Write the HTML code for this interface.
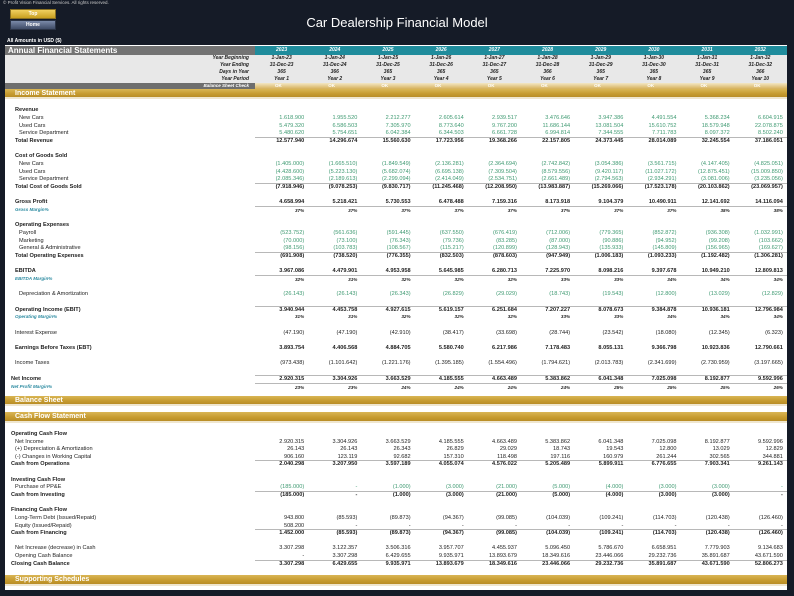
<!DOCTYPE html>
<html><head><meta charset="utf-8"><style>
body{margin:0;width:794px;height:596px;background:#151b27;font-family:"Liberation Sans",sans-serif;overflow:hidden;position:relative}
.abs{position:absolute}
.sheet{position:absolute;left:5px;top:45px;width:782px;height:545px;background:#fff}
.r{position:absolute;left:5px;width:782px;height:8px;display:flex;font-size:5.6px;line-height:8px;color:#222;white-space:nowrap}
.l{width:250px;box-sizing:border-box;overflow:hidden}
.c{width:53.2px;text-align:right;padding-right:4px;box-sizing:border-box}
.g .c{color:#3f9a72}
.b{font-weight:bold}
.t .c{border-top:1px solid #b8b8b8;line-height:7px}
.m{font-style:italic;font-weight:bold;color:#2b8aa0;font-size:4.6px}
.m .c{color:#222}
.bar{position:absolute;left:5px;width:782px;background:linear-gradient(#d9b655,#c69b2f 60%,#b98d27);color:#fff;font-weight:bold;font-size:7px;line-height:9px;padding-left:10px;box-sizing:border-box;border-bottom:2px solid #efe6cf}
.hd{background:#e8e8e8;font-style:italic;font-weight:bold;font-size:5px}
.hd .l{text-align:right;padding-right:6px}
.hd .c{text-align:center;padding:0}
</style></head><body>
<div class="abs" style="left:3px;top:0;font-size:4.5px;color:#ccc">© Profit Vision Financial Services. All rights reserved.</div>
<div class="abs" style="left:10px;top:9px;width:44px;height:8px;background:linear-gradient(#f0d060,#c9a020);border:1px solid #8a7020;color:#fff;font-size:5px;font-weight:bold;text-align:center;line-height:8px">Top</div>
<div class="abs" style="left:10px;top:20px;width:44px;height:8px;background:linear-gradient(#7a8aa8,#3e4b66);border:1px solid #2a3345;color:#fff;font-size:5px;font-weight:bold;text-align:center;line-height:8px">Home</div>
<div class="abs" style="left:0;width:794px;top:15px;text-align:center;color:#fff;font-size:13px">Car Dealership Financial Model</div>
<div class="abs" style="left:7px;top:38px;font-size:5px;color:#fff;font-weight:bold">All Amounts in USD ($)</div>
<div class="sheet"></div>
<div class="r" style="top:46px;height:9px;line-height:9px;background:#1f8c9c;color:#fff;font-weight:bold;font-style:italic;font-size:5px"><div class="l" style="background:#737373;font-size:8px;font-style:normal;padding-left:3px">Annual Financial Statements</div><div class="c" style="text-align:center;padding:0">2023</div><div class="c" style="text-align:center;padding:0">2024</div><div class="c" style="text-align:center;padding:0">2025</div><div class="c" style="text-align:center;padding:0">2026</div><div class="c" style="text-align:center;padding:0">2027</div><div class="c" style="text-align:center;padding:0">2028</div><div class="c" style="text-align:center;padding:0">2029</div><div class="c" style="text-align:center;padding:0">2030</div><div class="c" style="text-align:center;padding:0">2031</div><div class="c" style="text-align:center;padding:0">2032</div></div>
<div class="r hd" style="top:55px;height:7px;line-height:7px"><div class="l">Year Beginning</div><div class="c">1-Jan-23</div><div class="c">1-Jan-24</div><div class="c">1-Jan-25</div><div class="c">1-Jan-26</div><div class="c">1-Jan-27</div><div class="c">1-Jan-28</div><div class="c">1-Jan-29</div><div class="c">1-Jan-30</div><div class="c">1-Jan-31</div><div class="c">1-Jan-32</div></div>
<div class="r hd" style="top:62px;height:7px;line-height:7px"><div class="l">Year Ending</div><div class="c">31-Dec-23</div><div class="c">31-Dec-24</div><div class="c">31-Dec-25</div><div class="c">31-Dec-26</div><div class="c">31-Dec-27</div><div class="c">31-Dec-28</div><div class="c">31-Dec-29</div><div class="c">31-Dec-30</div><div class="c">31-Dec-31</div><div class="c">31-Dec-32</div></div>
<div class="r hd" style="top:69px;height:7px;line-height:7px"><div class="l">Days in Year</div><div class="c">365</div><div class="c">366</div><div class="c">365</div><div class="c">365</div><div class="c">365</div><div class="c">366</div><div class="c">365</div><div class="c">365</div><div class="c">365</div><div class="c">366</div></div>
<div class="r hd" style="top:76px;height:7px;line-height:7px"><div class="l">Year Period</div><div class="c">Year 1</div><div class="c">Year 2</div><div class="c">Year 3</div><div class="c">Year 4</div><div class="c">Year 5</div><div class="c">Year 6</div><div class="c">Year 7</div><div class="c">Year 8</div><div class="c">Year 9</div><div class="c">Year 10</div></div>
<div class="r" style="top:83px;height:6px;line-height:6px;font-size:4.5px;font-weight:bold;color:#fff;background:linear-gradient(#f3e7c4,#d6b05a)"><div class="l" style="background:#6e6e6e;text-align:right;padding-right:6px;font-style:italic">Balance Sheet Check</div><div class="c" style="text-align:left;padding-left:20px">OK</div><div class="c" style="text-align:left;padding-left:20px">OK</div><div class="c" style="text-align:left;padding-left:20px">OK</div><div class="c" style="text-align:left;padding-left:20px">OK</div><div class="c" style="text-align:left;padding-left:20px">OK</div><div class="c" style="text-align:left;padding-left:20px">OK</div><div class="c" style="text-align:left;padding-left:20px">OK</div><div class="c" style="text-align:left;padding-left:20px">OK</div><div class="c" style="text-align:left;padding-left:20px">OK</div><div class="c" style="text-align:left;padding-left:20px">OK</div></div>
<div class="bar" style="top:89px;height:10px">Income Statement</div>

<div class="r b" style="top:106px"><div class="l" style="padding-left:10px">Revenue</div></div>
<div class="r g" style="top:114px"><div class="l" style="padding-left:14px">New Cars</div><div class="c">1.618.900</div><div class="c">1.955.520</div><div class="c">2.212.277</div><div class="c">2.605.614</div><div class="c">2.939.517</div><div class="c">3.476.646</div><div class="c">3.947.386</div><div class="c">4.491.554</div><div class="c">5.368.234</div><div class="c">6.604.915</div></div>
<div class="r g" style="top:122px"><div class="l" style="padding-left:14px">Used Cars</div><div class="c">5.479.320</div><div class="c">6.586.503</div><div class="c">7.305.970</div><div class="c">8.773.640</div><div class="c">9.767.200</div><div class="c">11.686.144</div><div class="c">13.081.504</div><div class="c">15.610.752</div><div class="c">18.579.948</div><div class="c">22.078.875</div></div>
<div class="r g" style="top:129px"><div class="l" style="padding-left:14px">Service Department</div><div class="c">5.480.620</div><div class="c">5.754.651</div><div class="c">6.042.384</div><div class="c">6.344.503</div><div class="c">6.661.728</div><div class="c">6.994.814</div><div class="c">7.344.555</div><div class="c">7.711.783</div><div class="c">8.097.372</div><div class="c">8.502.240</div></div>
<div class="r b t" style="top:137px"><div class="l" style="padding-left:10px">Total Revenue</div><div class="c">12.577.940</div><div class="c">14.296.674</div><div class="c">15.560.630</div><div class="c">17.723.956</div><div class="c">19.368.266</div><div class="c">22.157.805</div><div class="c">24.373.445</div><div class="c">28.014.089</div><div class="c">32.245.554</div><div class="c">37.186.051</div></div>

<div class="r b" style="top:152px"><div class="l" style="padding-left:10px">Cost of Goods Sold</div></div>
<div class="r g" style="top:160px"><div class="l" style="padding-left:14px">New Cars</div><div class="c">(1.405.000)</div><div class="c">(1.665.510)</div><div class="c">(1.849.549)</div><div class="c">(2.136.281)</div><div class="c">(2.364.694)</div><div class="c">(2.742.842)</div><div class="c">(3.054.386)</div><div class="c">(3.561.715)</div><div class="c">(4.147.405)</div><div class="c">(4.825.051)</div></div>
<div class="r g" style="top:168px"><div class="l" style="padding-left:14px">Used Cars</div><div class="c">(4.428.600)</div><div class="c">(5.223.130)</div><div class="c">(5.682.074)</div><div class="c">(6.695.138)</div><div class="c">(7.309.504)</div><div class="c">(8.579.556)</div><div class="c">(9.420.117)</div><div class="c">(11.027.172)</div><div class="c">(12.875.451)</div><div class="c">(15.009.850)</div></div>
<div class="r g" style="top:175px"><div class="l" style="padding-left:14px">Service Department</div><div class="c">(2.085.346)</div><div class="c">(2.189.613)</div><div class="c">(2.299.094)</div><div class="c">(2.414.049)</div><div class="c">(2.534.751)</div><div class="c">(2.661.489)</div><div class="c">(2.794.563)</div><div class="c">(2.934.291)</div><div class="c">(3.081.006)</div><div class="c">(3.235.056)</div></div>
<div class="r b t" style="top:183px"><div class="l" style="padding-left:10px">Total Cost of Goods Sold</div><div class="c">(7.918.946)</div><div class="c">(9.078.253)</div><div class="c">(9.830.717)</div><div class="c">(11.245.468)</div><div class="c">(12.208.950)</div><div class="c">(13.983.887)</div><div class="c">(15.269.066)</div><div class="c">(17.523.178)</div><div class="c">(20.103.862)</div><div class="c">(23.069.957)</div></div>

<div class="r b" style="top:198px"><div class="l" style="padding-left:10px">Gross Profit</div><div class="c">4.658.994</div><div class="c">5.218.421</div><div class="c">5.730.553</div><div class="c">6.478.488</div><div class="c">7.159.316</div><div class="c">8.173.918</div><div class="c">9.104.379</div><div class="c">10.490.911</div><div class="c">12.141.692</div><div class="c">14.116.094</div></div>
<div class="r m t" style="top:206px"><div class="l" style="padding-left:10px">Gross Margin%</div><div class="c">37%</div><div class="c">37%</div><div class="c">37%</div><div class="c">37%</div><div class="c">37%</div><div class="c">37%</div><div class="c">37%</div><div class="c">37%</div><div class="c">38%</div><div class="c">38%</div></div>

<div class="r b" style="top:221px"><div class="l" style="padding-left:10px">Operating Expenses</div></div>
<div class="r g" style="top:229px"><div class="l" style="padding-left:14px">Payroll</div><div class="c">(523.752)</div><div class="c">(561.636)</div><div class="c">(591.445)</div><div class="c">(637.550)</div><div class="c">(676.419)</div><div class="c">(712.006)</div><div class="c">(779.365)</div><div class="c">(852.872)</div><div class="c">(936.308)</div><div class="c">(1.032.991)</div></div>
<div class="r g" style="top:237px"><div class="l" style="padding-left:14px">Marketing</div><div class="c">(70.000)</div><div class="c">(73.100)</div><div class="c">(76.343)</div><div class="c">(79.736)</div><div class="c">(83.285)</div><div class="c">(87.000)</div><div class="c">(90.886)</div><div class="c">(94.952)</div><div class="c">(99.208)</div><div class="c">(103.662)</div></div>
<div class="r g" style="top:244px"><div class="l" style="padding-left:14px">General &amp; Administrative</div><div class="c">(98.156)</div><div class="c">(103.783)</div><div class="c">(108.567)</div><div class="c">(115.217)</div><div class="c">(120.899)</div><div class="c">(128.943)</div><div class="c">(135.933)</div><div class="c">(145.809)</div><div class="c">(156.965)</div><div class="c">(169.627)</div></div>
<div class="r b t" style="top:252px"><div class="l" style="padding-left:10px">Total Operating Expenses</div><div class="c">(691.908)</div><div class="c">(738.520)</div><div class="c">(776.355)</div><div class="c">(832.503)</div><div class="c">(878.603)</div><div class="c">(947.949)</div><div class="c">(1.006.183)</div><div class="c">(1.093.233)</div><div class="c">(1.192.482)</div><div class="c">(1.306.281)</div></div>

<div class="r b" style="top:267px"><div class="l" style="padding-left:10px">EBITDA</div><div class="c">3.967.086</div><div class="c">4.479.901</div><div class="c">4.953.958</div><div class="c">5.645.985</div><div class="c">6.280.713</div><div class="c">7.225.970</div><div class="c">8.098.216</div><div class="c">9.397.678</div><div class="c">10.949.210</div><div class="c">12.809.813</div></div>
<div class="r m t" style="top:275px"><div class="l" style="padding-left:10px">EBITDA Margin%</div><div class="c">32%</div><div class="c">31%</div><div class="c">32%</div><div class="c">32%</div><div class="c">32%</div><div class="c">33%</div><div class="c">33%</div><div class="c">34%</div><div class="c">34%</div><div class="c">34%</div></div>

<div class="r g" style="top:290px"><div class="l" style="padding-left:14px;color:#222">Depreciation &amp; Amortization</div><div class="c">(26.143)</div><div class="c">(26.143)</div><div class="c">(26.343)</div><div class="c">(26.829)</div><div class="c">(29.029)</div><div class="c">(18.743)</div><div class="c">(19.543)</div><div class="c">(12.800)</div><div class="c">(13.029)</div><div class="c">(12.829)</div></div>
<div class="r b t" style="top:306px"><div class="l" style="padding-left:10px">Operating Income (EBIT)</div><div class="c">3.940.944</div><div class="c">4.453.758</div><div class="c">4.927.615</div><div class="c">5.619.157</div><div class="c">6.251.684</div><div class="c">7.207.227</div><div class="c">8.078.673</div><div class="c">9.384.878</div><div class="c">10.936.181</div><div class="c">12.796.984</div></div>
<div class="r m" style="top:313px"><div class="l" style="padding-left:10px">Operating Margin%</div><div class="c">31%</div><div class="c">31%</div><div class="c">32%</div><div class="c">32%</div><div class="c">32%</div><div class="c">33%</div><div class="c">33%</div><div class="c">34%</div><div class="c">34%</div><div class="c">34%</div></div>

<div class="r" style="top:329px"><div class="l" style="padding-left:10px">Interest Expense</div><div class="c">(47.190)</div><div class="c">(47.190)</div><div class="c">(42.910)</div><div class="c">(38.417)</div><div class="c">(33.698)</div><div class="c">(28.744)</div><div class="c">(23.542)</div><div class="c">(18.080)</div><div class="c">(12.345)</div><div class="c">(6.323)</div></div>
<div class="r b" style="top:344px"><div class="l" style="padding-left:10px">Earnings Before Taxes (EBT)</div><div class="c">3.893.754</div><div class="c">4.406.568</div><div class="c">4.884.705</div><div class="c">5.580.740</div><div class="c">6.217.986</div><div class="c">7.178.483</div><div class="c">8.055.131</div><div class="c">9.366.798</div><div class="c">10.923.836</div><div class="c">12.790.661</div></div>
<div class="r" style="top:359px"><div class="l" style="padding-left:10px">Income Taxes</div><div class="c">(973.438)</div><div class="c">(1.101.642)</div><div class="c">(1.221.176)</div><div class="c">(1.395.185)</div><div class="c">(1.554.496)</div><div class="c">(1.794.621)</div><div class="c">(2.013.783)</div><div class="c">(2.341.699)</div><div class="c">(2.730.959)</div><div class="c">(3.197.665)</div></div>
<div class="r b t" style="top:375px"><div class="l" style="padding-left:6px">Net Income</div><div class="c">2.920.315</div><div class="c">3.304.926</div><div class="c">3.663.529</div><div class="c">4.185.555</div><div class="c">4.663.489</div><div class="c">5.383.862</div><div class="c">6.041.348</div><div class="c">7.025.098</div><div class="c">8.192.877</div><div class="c">9.592.996</div></div>
<div class="r m t" style="top:383px"><div class="l" style="padding-left:6px">Net Profit Margin%</div><div class="c">23%</div><div class="c">23%</div><div class="c">24%</div><div class="c">24%</div><div class="c">24%</div><div class="c">24%</div><div class="c">25%</div><div class="c">25%</div><div class="c">25%</div><div class="c">26%</div></div>

<div class="bar" style="top:396px;height:10px">Balance Sheet</div>
<div class="bar" style="top:412px;height:11px">Cash Flow Statement</div>

<div class="r b" style="top:430px"><div class="l" style="padding-left:6px">Operating Cash Flow</div></div>
<div class="r" style="top:438px"><div class="l" style="padding-left:10px">Net Income</div><div class="c">2.920.315</div><div class="c">3.304.926</div><div class="c">3.663.529</div><div class="c">4.185.555</div><div class="c">4.663.489</div><div class="c">5.383.862</div><div class="c">6.041.348</div><div class="c">7.025.098</div><div class="c">8.192.877</div><div class="c">9.592.996</div></div>
<div class="r" style="top:445px"><div class="l" style="padding-left:10px">(+) Depreciation &amp; Amortization</div><div class="c">26.143</div><div class="c">26.143</div><div class="c">26.343</div><div class="c">26.829</div><div class="c">29.029</div><div class="c">18.743</div><div class="c">19.543</div><div class="c">12.800</div><div class="c">13.029</div><div class="c">12.829</div></div>
<div class="r" style="top:453px"><div class="l" style="padding-left:10px">(-) Changes in Working Capital</div><div class="c">906.160</div><div class="c">123.119</div><div class="c">92.682</div><div class="c">157.310</div><div class="c">118.498</div><div class="c">197.116</div><div class="c">160.979</div><div class="c">261.244</div><div class="c">302.565</div><div class="c">344.881</div></div>
<div class="r b t" style="top:460px"><div class="l" style="padding-left:6px">Cash from Operations</div><div class="c">2.040.298</div><div class="c">3.207.950</div><div class="c">3.597.189</div><div class="c">4.055.074</div><div class="c">4.576.022</div><div class="c">5.205.489</div><div class="c">5.899.911</div><div class="c">6.776.655</div><div class="c">7.903.341</div><div class="c">9.261.143</div></div>

<div class="r b" style="top:476px"><div class="l" style="padding-left:6px">Investing Cash Flow</div></div>
<div class="r g" style="top:483px"><div class="l" style="padding-left:10px;color:#222">Purchase of PP&amp;E</div><div class="c">(185.000)</div><div class="c">-</div><div class="c">(1.000)</div><div class="c">(3.000)</div><div class="c">(21.000)</div><div class="c">(5.000)</div><div class="c">(4.000)</div><div class="c">(3.000)</div><div class="c">(3.000)</div><div class="c">-</div></div>
<div class="r b t" style="top:491px"><div class="l" style="padding-left:6px">Cash from Investing</div><div class="c">(185.000)</div><div class="c">-</div><div class="c">(1.000)</div><div class="c">(3.000)</div><div class="c">(21.000)</div><div class="c">(5.000)</div><div class="c">(4.000)</div><div class="c">(3.000)</div><div class="c">(3.000)</div><div class="c">-</div></div>

<div class="r b" style="top:506px"><div class="l" style="padding-left:6px">Financing Cash Flow</div></div>
<div class="r" style="top:514px"><div class="l" style="padding-left:10px">Long-Term Debt (Issued/Repaid)</div><div class="c">943.800</div><div class="c">(85.593)</div><div class="c">(89.873)</div><div class="c">(94.367)</div><div class="c">(99.085)</div><div class="c">(104.039)</div><div class="c">(109.241)</div><div class="c">(114.703)</div><div class="c">(120.438)</div><div class="c">(126.460)</div></div>
<div class="r" style="top:522px"><div class="l" style="padding-left:10px">Equity (Issued/Repaid)</div><div class="c">508.200</div><div class="c">-</div><div class="c">-</div><div class="c">-</div><div class="c">-</div><div class="c">-</div><div class="c">-</div><div class="c">-</div><div class="c">-</div><div class="c">-</div></div>
<div class="r b t" style="top:529px"><div class="l" style="padding-left:6px">Cash from Financing</div><div class="c">1.452.000</div><div class="c">(85.593)</div><div class="c">(89.873)</div><div class="c">(94.367)</div><div class="c">(99.085)</div><div class="c">(104.039)</div><div class="c">(109.241)</div><div class="c">(114.703)</div><div class="c">(120.438)</div><div class="c">(126.460)</div></div>

<div class="r" style="top:544px"><div class="l" style="padding-left:10px">Net Increase (decrease) in Cash</div><div class="c">3.307.298</div><div class="c">3.122.357</div><div class="c">3.506.316</div><div class="c">3.957.707</div><div class="c">4.455.937</div><div class="c">5.096.450</div><div class="c">5.786.670</div><div class="c">6.658.951</div><div class="c">7.779.903</div><div class="c">9.134.683</div></div>
<div class="r" style="top:552px"><div class="l" style="padding-left:10px">Opening Cash Balance</div><div class="c">-</div><div class="c">3.307.298</div><div class="c">6.429.655</div><div class="c">9.935.971</div><div class="c">13.893.679</div><div class="c">18.349.616</div><div class="c">23.446.066</div><div class="c">29.232.736</div><div class="c">35.891.687</div><div class="c">43.671.590</div></div>
<div class="r b t" style="top:560px"><div class="l" style="padding-left:6px">Closing Cash Balance</div><div class="c">3.307.298</div><div class="c">6.429.655</div><div class="c">9.935.971</div><div class="c">13.893.679</div><div class="c">18.349.616</div><div class="c">23.446.066</div><div class="c">29.232.736</div><div class="c">35.891.687</div><div class="c">43.671.590</div><div class="c">52.806.273</div></div>

<div class="bar" style="top:575px;height:11px">Supporting Schedules</div>
</body></html>
